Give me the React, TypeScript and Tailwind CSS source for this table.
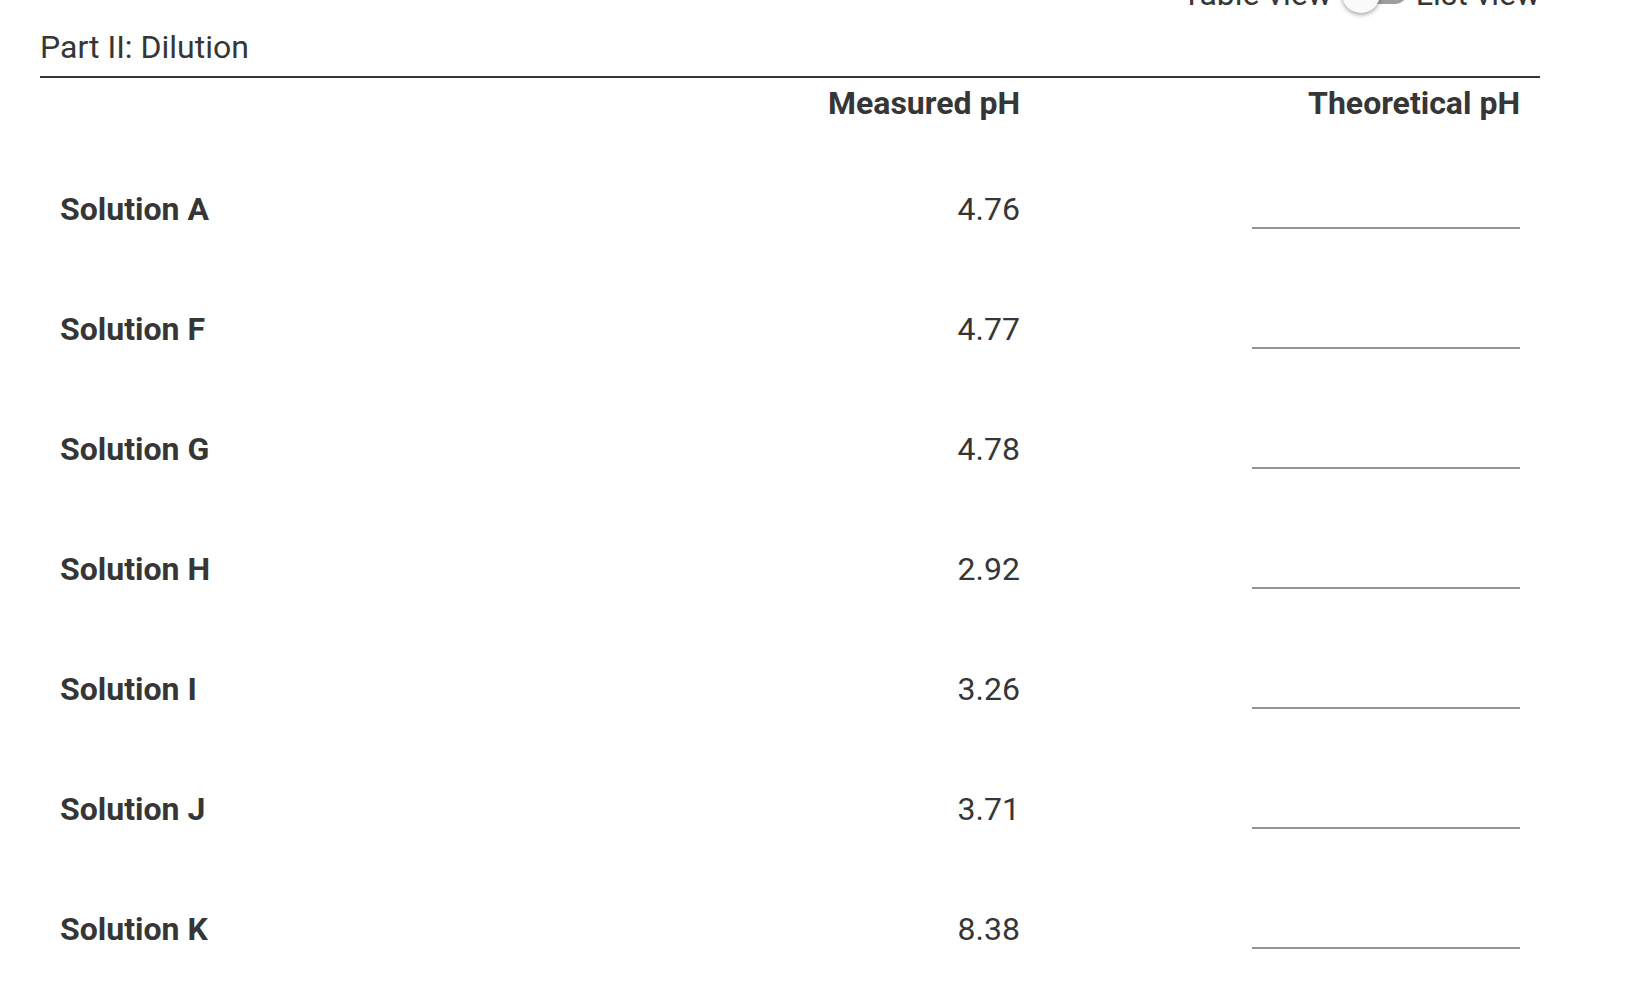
const rows = [
  { name: "Solution A", measured: "4.76" },
  { name: "Solution F", measured: "4.77" },
  { name: "Solution G", measured: "4.78" },
  { name: "Solution H", measured: "2.92" },
  { name: "Solution I", measured: "3.26" },
  { name: "Solution J", measured: "3.71" },
  { name: "Solution K", measured: "8.38" },
];

const ViewToggle = () => (
  <div className="flex justify-end items-center h-[38px] gap-[10px]">
    <span>Table view</span>
    <div className="relative w-[64px] h-[38px]">
      <div className="absolute left-[8px] right-0 top-[9px] h-[20px] rounded-full bg-[#9e9e9e]" />
      <div className="absolute left-0 top-0 w-[38px] h-[38px] rounded-full bg-[#fafafa] shadow-[0_2px_4px_rgba(0,0,0,0.35)]" />
    </div>
    <span>List view</span>
  </div>
);

const App = () => {
  return (
    <div className="min-h-screen bg-white overflow-hidden font-[Roboto,sans-serif] text-[32px] leading-[38px] text-[#363636]">
      <div className="w-[1500px] ml-[40px] -mt-[25px]">
        <ViewToggle />

        <h2 className="mt-[15px] pb-[10px] border-b-2 border-[#363636] font-normal">
          Part II: Dilution
        </h2>

        <div className="grid grid-cols-[500px_460px_500px] px-[20px]">
          <div className="h-[71px]" />
          <div className="h-[71px] pt-[6px] text-right font-bold">Measured pH</div>
          <div className="h-[71px] pt-[6px] text-right font-bold">Theoretical pH</div>

          {rows.map((row) => (
            <div key={row.name} className="contents">
              <div className="h-[120px] flex items-center font-bold">{row.name}</div>
              <div className="h-[120px] flex items-center justify-end">{row.measured}</div>
              <div className="h-[120px] flex items-center justify-end">
                <input
                  type="text"
                  className="w-[268px] h-[40px] border-b-2 border-[#939393] outline-none bg-transparent"
                />
              </div>
            </div>
          ))}
        </div>
      </div>
    </div>
  );
};

export default App;
